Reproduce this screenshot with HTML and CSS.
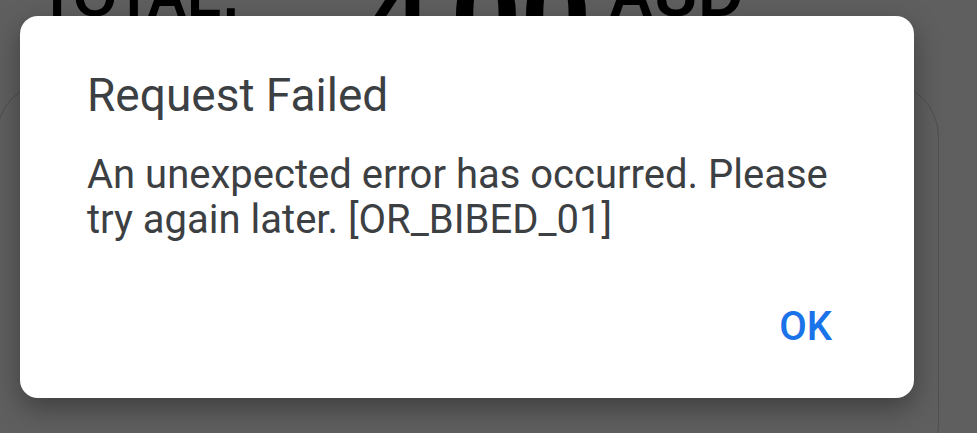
FILE: index.html
```html
<!DOCTYPE html>
<html lang="en">
<head>
    <meta charset="UTF-8">
    <meta name="viewport" content="width=device-width, initial-scale=1.0">
    <title>Request Failed</title>
    <link rel="stylesheet" href="styles.css">
</head>
<body>

    <!-- Pagina dietro lo scrim -->
    <div class="page">
        <div class="total">
            <span class="total-label">TOTAL:</span>
            <span class="total-int">4</span>
            <span class="total-dec">00</span>
            <span class="total-cur">AUD</span>
        </div>
        <div class="card"></div>
    </div>

    <!-- Dialog -->
    <div class="scrim">
        <div class="dialog">
            <h1 class="dialog-title">Request Failed</h1>
            <p class="dialog-text">An unexpected error has occurred. Please try again later. [OR_BIBED_01]</p>
            <div class="dialog-actions">
                <button class="btn">OK</button>
            </div>
        </div>
    </div>

</body>
</html>
```

FILE: styles.css
```css
* {
    margin: 0;
    padding: 0;
    box-sizing: border-box;
}

html,
body {
    width: 977px;
    height: 433px;
    overflow: hidden;
}

body {
    background-color: #5f5f5f;
    font-family: Roboto, "Noto Sans", Arial, sans-serif;
    position: relative;
}

/* Contenuto della pagina, oscurato */
.page {
    height: 100%;
    overflow: hidden;
}

.total {
    height: 56px;
    margin-top: -33px;
    padding-left: 40px;
    color: #000;
    font-family: "Liberation Sans", Arial, sans-serif;
    font-size: 56px;
    font-weight: bold;
    line-height: 56px;
    white-space: nowrap;
}

.total-label {
    display: inline-block;
    width: 300px;
}

.total-int {
    font-size: 104px;
    vertical-align: -28px;
    margin-left: 16px;
}

.total-dec {
    font-size: 126px;
    vertical-align: -44px;
    margin-left: 6px;
}

.total-cur {
    font-size: 62px;
    margin-left: 2px;
}

.card {
    margin: 58px 38px 0 -4px;
    height: 400px;
    border: 1px solid #4f4f4f;
    border-radius: 56px;
}

/* Dialog sopra lo scrim */
.scrim {
    position: absolute;
    top: 0;
    left: 0;
    width: 100%;
    height: 100%;
}

.dialog {
    position: absolute;
    top: 16px;
    left: 20px;
    width: 894px;
    height: 382px;
    background: #fff;
    border-radius: 18px;
    padding: 52px 60px 0 67px;
    box-shadow: 0 10px 28px rgba(0, 0, 0, 0.35);
    color: #3c4043;
}

.dialog-title {
    font-size: 46px;
    font-weight: 400;
    line-height: 54px;
}

.dialog-text {
    margin-top: 30px;
    font-size: 40px;
    line-height: 45px;
}

.dialog-actions {
    display: flex;
    justify-content: flex-end;
    margin-top: 62px;
    margin-right: 22px;
}

.btn {
    background: none;
    border: none;
    color: #1a73e8;
    font-family: Roboto, Arial, sans-serif;
    font-size: 40px;
    font-weight: 500;
    line-height: 45px;
    cursor: pointer;
}
```
